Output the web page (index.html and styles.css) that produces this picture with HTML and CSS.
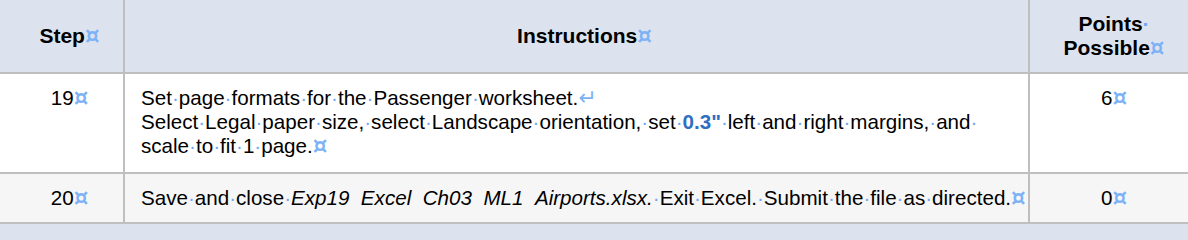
FILE: index.html
```html
<!DOCTYPE html>
<html lang="en">

<head>
    <meta charset="UTF-8">
    <title>Grader Steps</title>
    <link rel="stylesheet" href="styles.css">
</head>

<body>

    <div class="steps">
        <!-- header row -->
        <div class="cell head col-step"><span>Step<span class="end">¤</span></span></div>
        <div class="cell head col-text"><span>Instructions<span class="end">¤</span></span></div>
        <div class="cell head col-pts"><span>Points<span class="sp">·</span><br>Possible<span class="end">¤</span></span></div>

        <!-- step 19 -->
        <div class="cell col-step">19<span class="end">¤</span></div>
        <div class="cell col-text">
            Set<span class="sp">·</span>page<span class="sp">·</span>formats<span class="sp">·</span>for<span class="sp">·</span>the<span class="sp">·</span>Passenger<span class="sp">·</span>worksheet.<span class="brk">↵</span><br>
            Select<span class="sp">·</span>Legal<span class="sp">·</span>paper<span class="sp">·</span>size,<span class="sp">·</span>select<span class="sp">·</span>Landscape<span class="sp">·</span>orientation,<span class="sp">·</span>set<span class="sp">·</span><strong class="val">0.3"</strong><span class="sp">·</span>left<span class="sp">·</span>and<span class="sp">·</span>right<span class="sp">·</span>margins,<span class="sp">·</span>and<span class="sp">·</span><br>
            scale<span class="sp">·</span>to<span class="sp">·</span>fit<span class="sp">·</span>1<span class="sp">·</span>page.<span class="end">¤</span>
        </div>
        <div class="cell col-pts">6<span class="end">¤</span></div>

        <!-- step 20 -->
        <div class="cell alt col-step">20<span class="end">¤</span></div>
        <div class="cell alt col-text">
            Save<span class="sp">·</span>and<span class="sp">·</span>close<span class="sp">·</span><em>Exp19<span class="us">_</span>Excel<span class="us">_</span>Ch03<span class="us">_</span>ML1<span class="us">_</span>Airports.xlsx.</em><span class="sp">·</span>Exit<span class="sp">·</span>Excel.<span class="sp">·</span>Submit<span class="sp">·</span>the<span class="sp">·</span>file<span class="sp">·</span>as<span class="sp">·</span>directed.<span class="end">¤</span>
        </div>
        <div class="cell alt col-pts">0<span class="end">¤</span></div>
    </div>

</body>

</html>
```

FILE: styles.css
```css
body {
    margin: 0;
    background-color: #dde3ee;
    font-family: 'Liberation Sans', Arial, Helvetica, sans-serif;
    font-size: 20.6px;
    line-height: 24px;
    color: #000;
    overflow: hidden;
}

/* table grid: the gaps show through as the cell borders */
.steps {
    display: grid;
    grid-template-columns: 123px 903px 1fr;
    grid-template-rows: 72px 98px 48px;
    gap: 2px;
    background-color: #bfbfbf;
    border-bottom: 2px solid #bfbfbf;
}

.cell {
    background-color: #ffffff;
    padding-top: 12px;
    white-space: nowrap;
}

.cell.alt {
    background-color: #f6f6f6;
}

.cell.head {
    background-color: #dde3ee;
    font-size: 21px;
    font-weight: bold;
    padding-top: 0;
    display: flex;
    align-items: center;
    justify-content: center;
    text-align: center;
}

.col-step {
    padding-left: 16px;
    text-align: center;
}

.col-text {
    padding-left: 16px;
}

.col-pts {
    padding-left: 16px;
    padding-right: 6px;
    text-align: center;
}

/* formatting marks */
.end {
    color: #7db2f6;
    font-family: 'DejaVu Sans', sans-serif;
    font-size: 23px;
    font-weight: bold;
    line-height: 0;
}

.sp {
    color: #6ea8f2;
}

.brk {
    color: #7db2f6;
    font-family: 'DejaVu Sans', sans-serif;
    font-size: 22px;
    line-height: 0;
}

.us {
    color: transparent;
}

.val {
    color: #2f6fc1;
}
```
